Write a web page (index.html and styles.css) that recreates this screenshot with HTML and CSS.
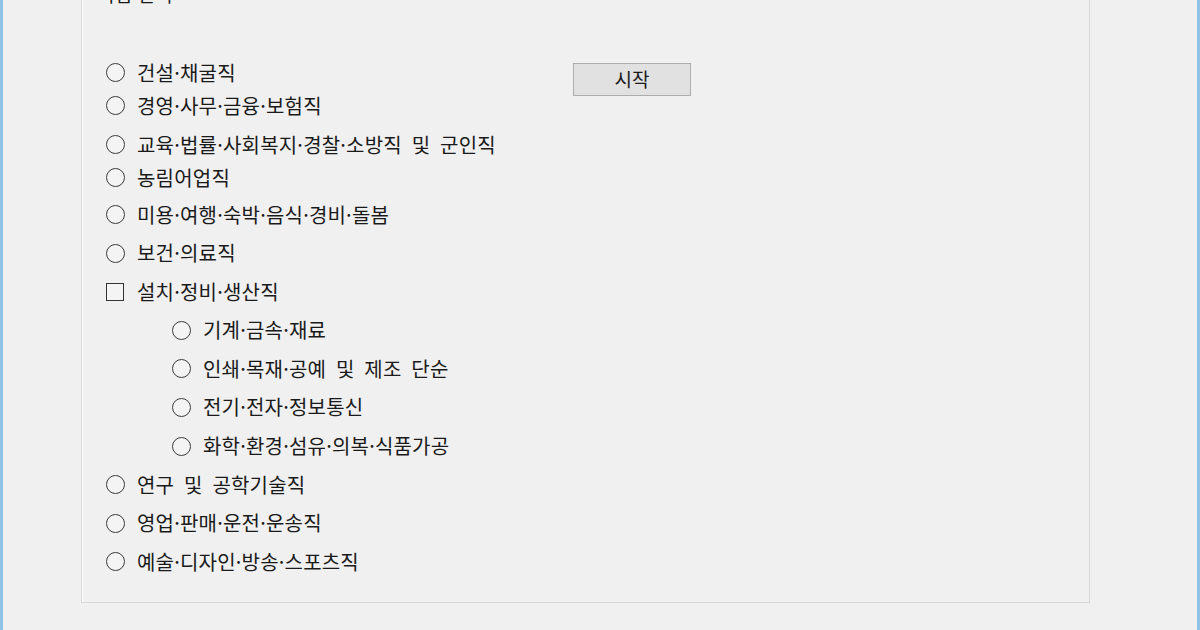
FILE: index.html
```html
<!DOCTYPE html>
<html lang="ko">
<head>
<meta charset="utf-8">
<link rel="stylesheet" href="styles.css">
</head>
<body>
<div class="window">
  <div class="group">
    <div class="legend">직업 선택</div>
    <div class="content">
      <div class="list">
        <div class="row"><span class="radio"></span><span class="label">건설·채굴직</span></div>
        <div class="row g3"><span class="radio"></span><span class="label">경영·사무·금융·보험직</span></div>
        <div class="row g9"><span class="radio"></span><span class="label">교육·법률·사회복지·경찰·소방직 및 군인직</span></div>
        <div class="row g3"><span class="radio"></span><span class="label">농림어업직</span></div>
        <div class="row g7"><span class="radio"></span><span class="label">미용·여행·숙박·음식·경비·돌봄</span></div>
        <div class="row"><span class="radio"></span><span class="label">보건·의료직</span></div>
        <div class="row"><span class="check"></span><span class="label">설치·정비·생산직</span></div>
        <div class="row sub"><span class="radio"></span><span class="label">기계·금속·재료</span></div>
        <div class="row sub"><span class="radio"></span><span class="label">인쇄·목재·공예 및 제조 단순</span></div>
        <div class="row sub"><span class="radio"></span><span class="label">전기·전자·정보통신</span></div>
        <div class="row sub"><span class="radio"></span><span class="label">화학·환경·섬유·의복·식품가공</span></div>
        <div class="row"><span class="radio"></span><span class="label">연구 및 공학기술직</span></div>
        <div class="row"><span class="radio"></span><span class="label">영업·판매·운전·운송직</span></div>
        <div class="row"><span class="radio"></span><span class="label">예술·디자인·방송·스포츠직</span></div>
      </div>
      <button class="btn">시작</button>
    </div>
  </div>
</div>
</body>
</html>
```
FILE: styles.css
```css
html, body {
  margin: 0;
  padding: 0;
}
body {
  width: 1200px;
  height: 630px;
  overflow: hidden;
  background: #f0f0f0;
  font-family: "Noto Sans CJK KR", "Noto Sans", sans-serif;
  color: #1a1a1a;
}
.window {
  box-sizing: border-box;
  display: flex;
  align-items: flex-start;
  width: 1200px;
  height: 630px;
  border-left: 3px solid #8fc3e6;
  border-right: 3px solid #8fc3e6;
  padding-left: 78px;
}
.group {
  box-sizing: border-box;
  flex: none;
  width: 1009px;
  height: 624px;
  margin-top: -21px;
  border: 1px solid #d8d8d8;
  box-shadow: inset 1px 1px 0 #ffffff;
}
.legend {
  font-size: 19px;
  line-height: 24px;
  height: 24px;
  padding-left: 15px;
  margin-top: 2px;
  margin-bottom: -5px;
}
.content {
  display: flex;
  align-items: flex-start;
  padding-left: 24px;
  padding-top: 56.5px;
}
.list {
  display: flex;
  flex-direction: column;
  width: 467px;
}
.row {
  display: flex;
  align-items: center;
  height: 30px;
  white-space: nowrap;
}
.row + .row { margin-top: 8.6px; }
.row.g3 { margin-top: 3px; }
.row.g7 { margin-top: 7px; }
.row.g9 { margin-top: 9px; }
.row.sub { padding-left: 66px; }
.radio {
  box-sizing: border-box;
  flex: none;
  width: 19px;
  height: 19px;
  border: 1.8px solid #3a3a3a;
  border-radius: 50%;
  background: #f4f4f4;
  margin-right: 12px;
}
.check {
  box-sizing: border-box;
  flex: none;
  width: 18px;
  height: 18px;
  border: 1.7px solid #333333;
  background: #f4f4f4;
  margin-right: 13px;
}
.label {
  font-size: 20px;
  letter-spacing: 0.2px;
  word-spacing: 4px;
  line-height: 24px;
}
.btn {
  box-sizing: border-box;
  width: 118px;
  height: 33px;
  margin-top: 5px;
  background: #e1e1e1;
  border: 1px solid #adadad;
  border-radius: 0;
  font-family: "Noto Sans CJK KR", "Noto Sans", sans-serif;
  font-size: 19px;
  line-height: 24px;
  color: #1a1a1a;
  padding: 0;
}
```
